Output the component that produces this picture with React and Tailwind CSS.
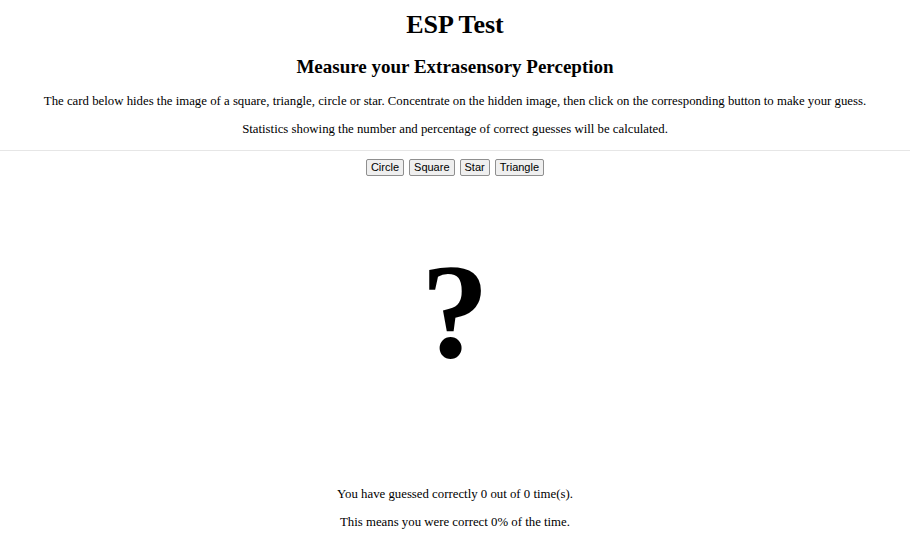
import React, { useState } from 'react';

const shapes = ['Circle', 'Square', 'Star', 'Triangle'];

const App = () => {
  const [correct, setCorrect] = useState(0);
  const [total, setTotal] = useState(0);

  const guess = (name) => {
    const hidden = shapes[Math.floor(Math.random() * shapes.length)];
    setTotal((t) => t + 1);
    if (hidden === name) setCorrect((c) => c + 1);
  };

  const pct = total ? Math.round((correct / total) * 100) : 0;

  return (
    <div className="min-h-screen bg-white text-black text-center font-['Liberation_Serif',serif]">
      <h1 className="pt-[9px] text-[26px] leading-[32px] font-bold">ESP Test</h1>
      <h2 className="mt-[14px] text-[19px] leading-[24px] font-bold">Measure your Extrasensory Perception</h2>
      <p className="mt-[14px] text-[12.8px] leading-[16px]">
        The card below hides the image of a square, triangle, circle or star. Concentrate on the hidden image, then click on the corresponding button to make your guess.
      </p>
      <p className="mt-[12px] text-[12.8px] leading-[16px]">
        Statistics showing the number and percentage of correct guesses will be calculated.
      </p>
      <hr className="mt-[13px] border-t border-[#e6e6e6]" />
      <div className="mt-[8px] flex justify-center gap-[5px]">
        {shapes.map((s) => (
          <button
            key={s}
            onClick={() => guess(s)}
            className="h-[17px] px-[4px] text-[11px] leading-[13px] font-['Liberation_Sans',Arial,sans-serif] bg-[#efefef] border border-[#8f8f8f] rounded-[2px]"
          >
            {s}
          </button>
        ))}
      </div>
      <div className="mt-[35px] h-[200px] flex items-center justify-center">
        <span className="text-[136px] leading-none font-bold font-['Liberation_Serif',serif]">?</span>
      </div>
      <p className="mt-[75px] text-[12.8px] leading-[16px]">
        You have guessed correctly {correct} out of {total} time(s).
      </p>
      <p className="mt-[12px] text-[12.8px] leading-[16px]">
        This means you were correct {pct}% of the time.
      </p>
    </div>
  );
};

export default App;
